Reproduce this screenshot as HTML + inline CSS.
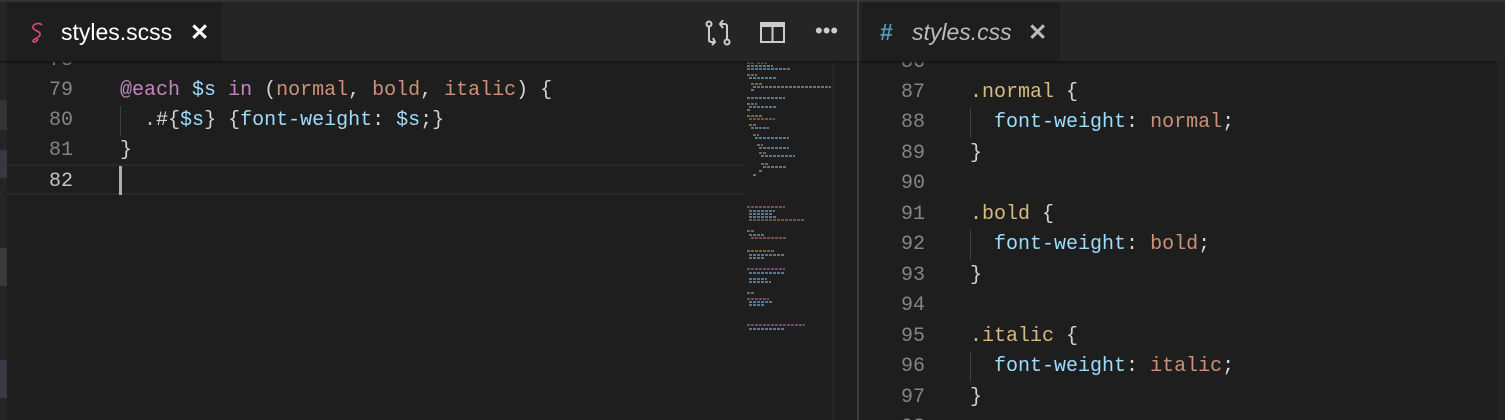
<!DOCTYPE html>
<html><head><style>
*{margin:0;padding:0;box-sizing:border-box}
html,body{width:1505px;height:420px;overflow:hidden}
body{background:#1e1e1e;position:relative;font-family:"Liberation Mono",monospace;font-size:20px}
.abs{position:absolute}
.tabbar{top:0;height:61px;background:#252526;border-top:2px solid #333}
.tab{top:2px;height:59px;background:#1e1e1e;font-family:"Liberation Sans",sans-serif;font-size:23px;color:#fff;line-height:60px}
.ln{color:#858585;text-align:right;width:60px;white-space:pre}
.code{white-space:pre;color:#d4d4d4}
.l{position:absolute;height:30px;line-height:30px}
.p{color:#c586c0}.v{color:#9cdcfe}.s{color:#ce9178}.c{color:#d7ba7d}
.guide{position:absolute;width:1px;background:#404040}
</style></head><body>
<div class="abs" style="left:0;top:61px;width:7px;height:359px;background:#252526"></div>
<div class="abs" style="left:0;top:100px;width:7px;height:30px;background:#333"></div>
<div class="abs" style="left:0;top:150px;width:7px;height:28px;background:#383840"></div>
<div class="abs" style="left:0;top:248px;width:7px;height:38px;background:#3a3a3a"></div>
<div class="abs" style="left:0;top:360px;width:7px;height:38px;background:#3a3a44"></div>
<div class="abs" style="left:857px;top:0;width:2px;height:420px;background:#3a3a3a"></div>
<div class="abs" style="left:833px;top:61px;width:1px;height:359px;background:#2c2c2c"></div>
<div class="abs" style="left:7px;top:164px;width:738px;height:31px;border-top:2px solid #282828;border-bottom:2px solid #282828"></div>
<!-- minimap -->
<svg class="abs" style="left:745px;top:61px" width="88" height="280" opacity="0.75">
<g stroke-width="1.2" stroke-dasharray="3 1">
<line x1="2" y1="2" x2="10" y2="2" stroke="#c586c0"/><line x1="12" y1="2" x2="22" y2="2" stroke="#ce9178"/>
<line x1="2" y1="5" x2="28" y2="5" stroke="#9cdcfe"/><line x1="2" y1="8" x2="46" y2="8" stroke="#9cdcfe"/>
<line x1="2" y1="14" x2="12" y2="14" stroke="#d7ba7d"/><line x1="4" y1="17" x2="32" y2="17" stroke="#9cdcfe"/>
<line x1="6" y1="23" x2="18" y2="23" stroke="#d7ba7d"/><line x1="8" y1="26" x2="86" y2="26" stroke="#9cdcfe"/>
<line x1="6" y1="29" x2="10" y2="29" stroke="#d4d4d4"/>
<line x1="2" y1="37" x2="40" y2="37" stroke="#9cdcfe"/><line x1="2" y1="43" x2="12" y2="43" stroke="#d7ba7d"/>
<line x1="4" y1="46" x2="32" y2="46" stroke="#9cdcfe"/><line x1="2" y1="49" x2="5" y2="49" stroke="#d4d4d4"/>
<line x1="2" y1="55" x2="18" y2="55" stroke="#d7ba7d"/><line x1="4" y1="58" x2="30" y2="58" stroke="#ce9178"/>
<line x1="4" y1="64" x2="12" y2="64" stroke="#d7ba7d"/><line x1="6" y1="67" x2="24" y2="67" stroke="#9cdcfe"/>
<line x1="8" y1="74" x2="14" y2="74" stroke="#d7ba7d"/><line x1="10" y1="77" x2="44" y2="77" stroke="#9cdcfe"/>
<line x1="12" y1="84" x2="18" y2="84" stroke="#d7ba7d"/><line x1="14" y1="87" x2="44" y2="87" stroke="#9cdcfe"/>
<line x1="14" y1="92" x2="22" y2="92" stroke="#d7ba7d"/><line x1="16" y1="95" x2="50" y2="95" stroke="#9cdcfe"/>
<line x1="16" y1="103" x2="24" y2="103" stroke="#d7ba7d"/><line x1="18" y1="106" x2="42" y2="106" stroke="#9cdcfe"/>
<line x1="14" y1="110" x2="18" y2="110" stroke="#d4d4d4"/><line x1="8" y1="114" x2="12" y2="114" stroke="#d4d4d4"/>
<line x1="2" y1="146" x2="40" y2="146" stroke="#c586c0"/><line x1="4" y1="150" x2="30" y2="150" stroke="#9cdcfe"/>
<line x1="4" y1="153" x2="28" y2="153" stroke="#9cdcfe"/><line x1="4" y1="156" x2="32" y2="156" stroke="#9cdcfe"/>
<line x1="4" y1="159" x2="60" y2="159" stroke="#ce9178"/>
<line x1="2" y1="170" x2="10" y2="170" stroke="#d7ba7d"/><line x1="4" y1="174" x2="20" y2="174" stroke="#9cdcfe"/><line x1="6" y1="177" x2="42" y2="177" stroke="#ce9178"/>
<line x1="2" y1="190" x2="30" y2="190" stroke="#d7ba7d"/><line x1="4" y1="194" x2="40" y2="194" stroke="#9cdcfe"/><line x1="4" y1="197" x2="20" y2="197" stroke="#9cdcfe"/>
<line x1="2" y1="208" x2="40" y2="208" stroke="#c586c0"/><line x1="4" y1="212" x2="40" y2="212" stroke="#9cdcfe"/>
<line x1="4" y1="218" x2="22" y2="218" stroke="#9cdcfe"/><line x1="4" y1="221" x2="26" y2="221" stroke="#9cdcfe"/>
<line x1="2" y1="232" x2="10" y2="232" stroke="#d7ba7d"/><line x1="2" y1="238" x2="24" y2="238" stroke="#c586c0"/>
<line x1="4" y1="241" x2="28" y2="241" stroke="#9cdcfe"/><line x1="4" y1="244" x2="20" y2="244" stroke="#9cdcfe"/>
<line x1="2" y1="264" x2="60" y2="264" stroke="#c586c0"/><line x1="4" y1="268" x2="40" y2="268" stroke="#9cdcfe"/>
</g></svg>
<div class="l ln" style="left:13px;top:46px">78</div>
<div class="l ln" style="left:865px;top:48px">86</div>
<div class="abs tabbar" style="left:0;width:857px"></div>
<div class="abs tabbar" style="left:859px;width:646px"></div>
<div class="abs tab" style="left:7px;width:215px">
<svg class="abs" style="left:22px;top:20px" width="18" height="22" viewBox="0 0 18 22"><path d="M13 3 C10 0 3 2 4 6 C5 9 12 9 11 13 C10 16 4 17 4 19 C4 21 8 20 9 17" fill="none" stroke="#e0467f" stroke-width="1.6"/></svg>
<span class="abs" style="left:54px">styles.scss</span>
<span class="abs" style="left:183px;font-weight:bold">✕</span></div>
<div class="abs tab" style="left:862px;width:198px;color:#bbb">
<span class="abs" style="left:18px;color:#519aba;font-weight:bold">#</span>
<span class="abs" style="left:50px;font-style:italic">styles.css</span>
<span class="abs" style="left:166px;font-weight:bold;color:#bbb">✕</span></div>
<svg class="abs" style="left:705px;top:20px" width="26" height="26" viewBox="0 0 26 26" fill="none" stroke="#ccc" stroke-width="2"><circle cx="4" cy="4" r="2.5"/><circle cx="22" cy="22" r="2.5"/><path d="M4 7 V20 Q4 22 7 22 H10 M8 18 L10 22 L7 25"/><path d="M22 19 V6 Q22 4 19 4 H16 M18 0 L15 4 L18 8"/></svg>
<svg class="abs" style="left:760px;top:22px" width="25" height="21"><rect x="1" y="1" width="23" height="19" fill="none" stroke="#ccc" stroke-width="2"/><rect x="1" y="1" width="23" height="4" fill="#ccc"/><line x1="12.5" y1="1" x2="12.5" y2="20" stroke="#ccc" stroke-width="2"/></svg>
<div class="abs" style="left:815px;top:18px;color:#ccc;font-size:22px;font-family:'Liberation Sans'">•••</div>
<div class="abs" style="left:0;top:61px;width:857px;height:3px;background:linear-gradient(#111,transparent)"></div>
<div class="abs" style="left:859px;top:61px;width:646px;height:3px;background:linear-gradient(#111,transparent)"></div>
<div class="guide" style="left:120px;top:106px;height:30px"></div>
<div class="l ln" style="left:13px;top:76px">79</div>
<div class="l ln" style="left:13px;top:106px">80</div>
<div class="l ln" style="left:13px;top:136px">81</div>
<div class="l ln" style="left:13px;top:167px;color:#c6c6c6">82</div>
<div class="l code" style="left:120px;top:76px"><span class="p">@each</span> <span class="v">$s</span> <span class="p">in</span> (<span class="s">normal</span>, <span class="s">bold</span>, <span class="s">italic</span>) {</div>
<div class="l code" style="left:120px;top:106px">  <span class="c">.</span>#{<span class="v">$s</span>} {<span class="v">font-weight</span>: <span class="v">$s</span>;}</div>
<div class="l code" style="left:120px;top:136px">}</div>
<div class="abs" style="left:119px;top:166px;width:3px;height:29px;background:#aeafad"></div>
<div class="l ln" style="left:865px;top:78px">87</div>
<div class="l ln" style="left:865px;top:108px">88</div>
<div class="l ln" style="left:865px;top:139px">89</div>
<div class="l ln" style="left:865px;top:169px">90</div>
<div class="l ln" style="left:865px;top:200px">91</div>
<div class="l ln" style="left:865px;top:230px">92</div>
<div class="l ln" style="left:865px;top:261px">93</div>
<div class="l ln" style="left:865px;top:291px">94</div>
<div class="l ln" style="left:865px;top:322px">95</div>
<div class="l ln" style="left:865px;top:352px">96</div>
<div class="l ln" style="left:865px;top:383px">97</div>
<div class="l ln" style="left:865px;top:413px;height:7px;overflow:hidden">98</div>
<div class="guide" style="left:970px;top:108px;height:30px"></div>
<div class="guide" style="left:970px;top:230px;height:30px"></div>
<div class="guide" style="left:970px;top:352px;height:30px"></div>
<div class="l code" style="left:970px;top:78px"><span class="c">.normal</span> {</div>
<div class="l code" style="left:970px;top:108px">  <span class="v">font-weight</span>: <span class="s">normal</span>;</div>
<div class="l code" style="left:970px;top:139px">}</div>
<div class="l code" style="left:970px;top:200px"><span class="c">.bold</span> {</div>
<div class="l code" style="left:970px;top:230px">  <span class="v">font-weight</span>: <span class="s">bold</span>;</div>
<div class="l code" style="left:970px;top:261px">}</div>
<div class="l code" style="left:970px;top:322px"><span class="c">.italic</span> {</div>
<div class="l code" style="left:970px;top:352px">  <span class="v">font-weight</span>: <span class="s">italic</span>;</div>
<div class="l code" style="left:970px;top:383px">}</div>
<div class="abs" style="left:1497px;top:61px;width:8px;height:359px;background:#232323"></div>
</body></html>
